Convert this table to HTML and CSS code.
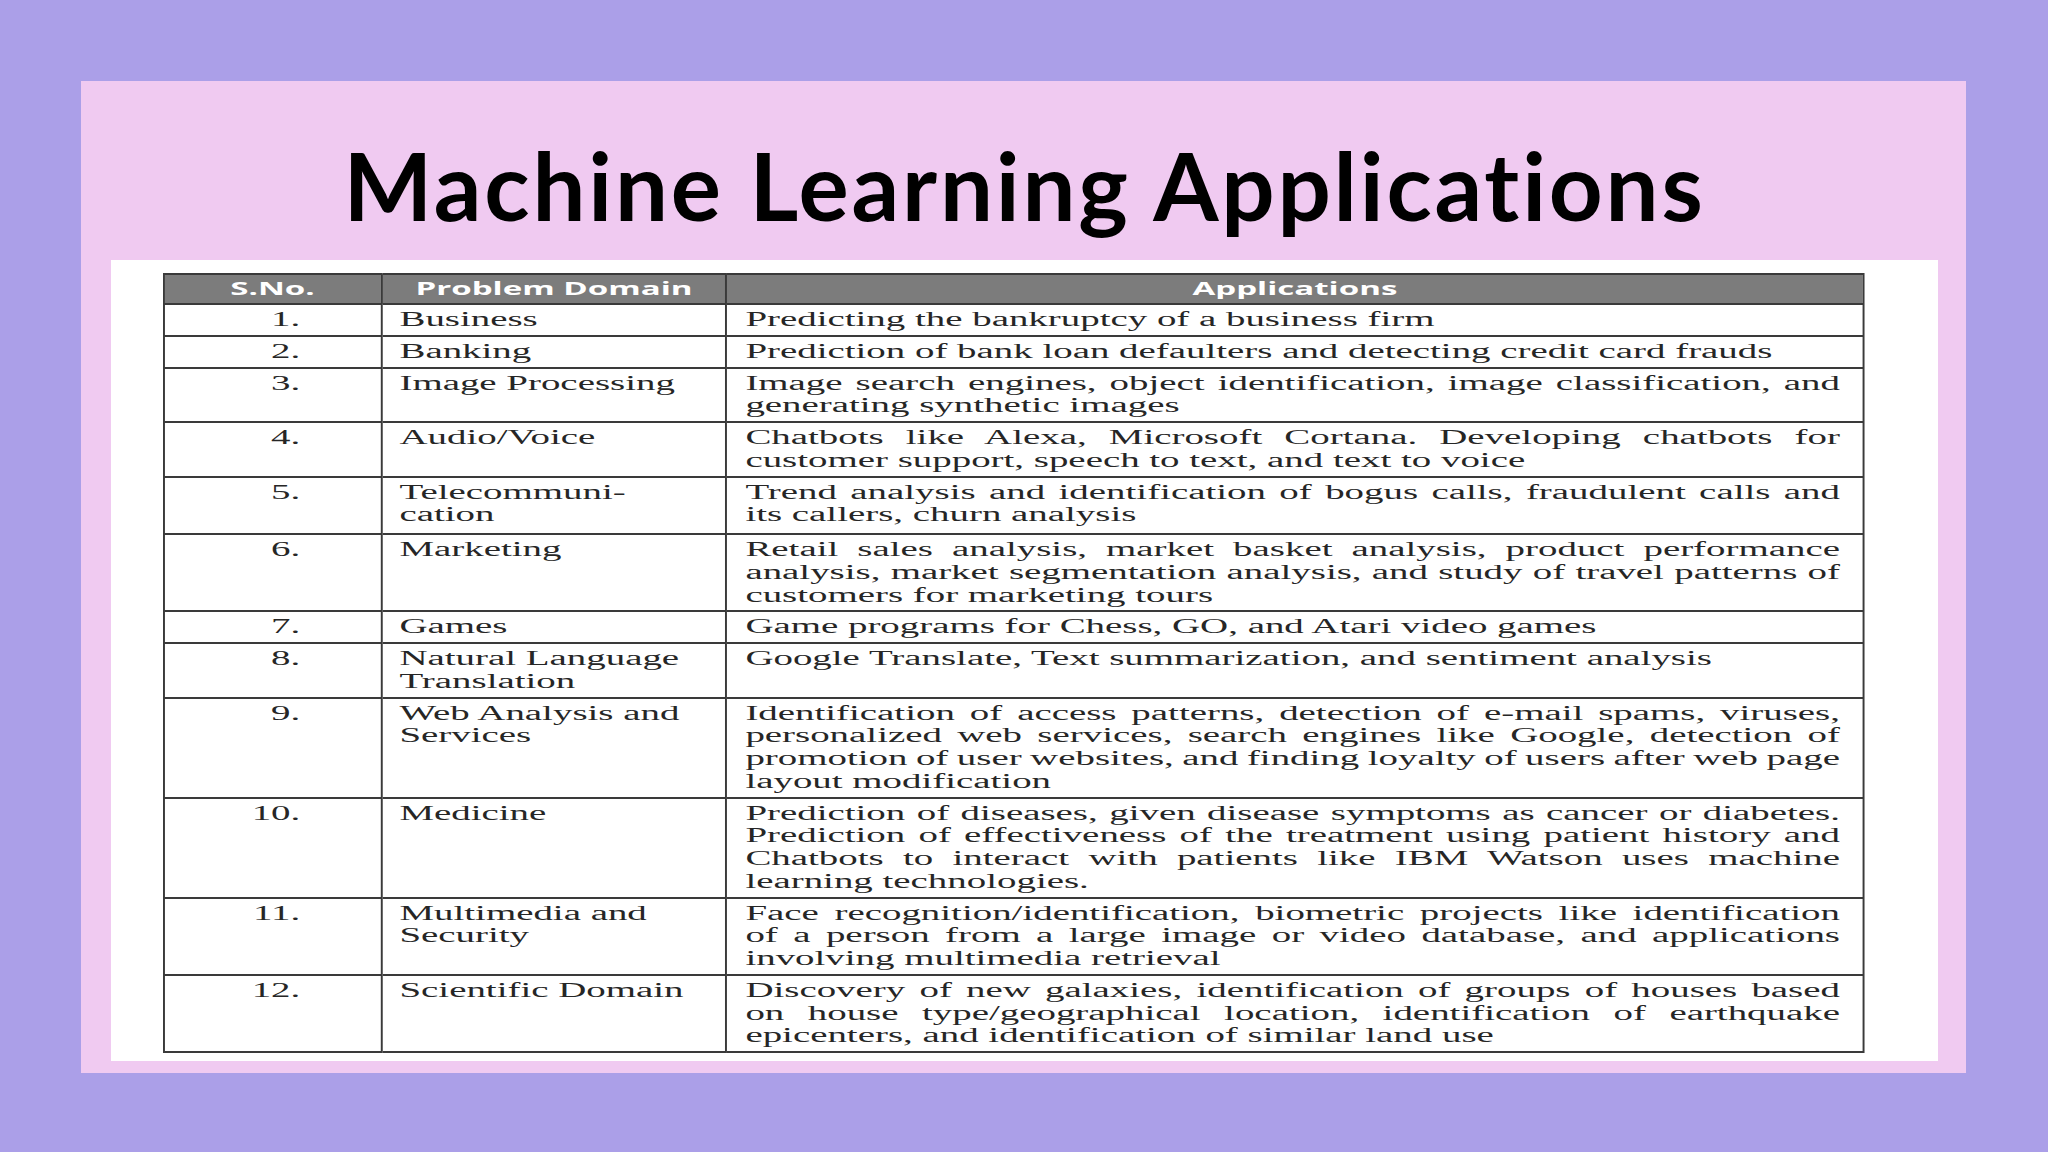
FILE: index.html
```html
<!DOCTYPE html>
<html lang="en">
<head>
<meta charset="utf-8">
<title>Machine Learning Applications</title>
<link rel="stylesheet" href="styles.css">
</head>
<body>
<div class="slide">
  <div class="panel">
    <h1 class="title">Machine Learning Applications</h1>
    <div class="sheet">
      <table class="ml">
        <colgroup>
          <col class="c1"><col class="c2"><col class="c3">
        </colgroup>
        <thead>
          <tr><th>S.No.</th><th>Problem Domain</th><th>Applications</th></tr>
        </thead>
        <tbody>
          <tr><td class="n">1.</td><td class="d">Business</td><td class="a"><div class="l">Predicting the bankruptcy of a business firm</div></td></tr>
          <tr><td class="n">2.</td><td class="d">Banking</td><td class="a"><div class="l">Prediction of bank loan defaulters and detecting credit card frauds</div></td></tr>
          <tr><td class="n">3.</td><td class="d">Image Processing</td><td class="a"><div class="l j">Image search engines, object identification, image classification, and</div><div class="l">generating synthetic images</div></td></tr>
          <tr><td class="n">4.</td><td class="d">Audio/Voice</td><td class="a"><div class="l j">Chatbots like Alexa, Microsoft Cortana. Developing chatbots for</div><div class="l">customer support, speech to text, and text to voice</div></td></tr>
          <tr class="tall"><td class="n">5.</td><td class="d">Telecommuni-<br>cation</td><td class="a"><div class="l j">Trend analysis and identification of bogus calls, fraudulent calls and</div><div class="l">its callers, churn analysis</div></td></tr>
          <tr><td class="n">6.</td><td class="d">Marketing</td><td class="a"><div class="l j">Retail sales analysis, market basket analysis, product performance</div><div class="l j">analysis, market segmentation analysis, and study of travel patterns of</div><div class="l">customers for marketing tours</div></td></tr>
          <tr><td class="n">7.</td><td class="d">Games</td><td class="a"><div class="l">Game programs for Chess, GO, and Atari video games</div></td></tr>
          <tr><td class="n">8.</td><td class="d">Natural Language<br>Translation</td><td class="a"><div class="l">Google Translate, Text summarization, and sentiment analysis</div></td></tr>
          <tr><td class="n">9.</td><td class="d">Web Analysis and<br>Services</td><td class="a"><div class="l j">Identification of access patterns, detection of e-mail spams, viruses,</div><div class="l j">personalized web services, search engines like Google, detection of</div><div class="l j">promotion of user websites, and finding loyalty of users after web page</div><div class="l">layout modification</div></td></tr>
          <tr><td class="n">10.</td><td class="d">Medicine</td><td class="a"><div class="l j">Prediction of diseases, given disease symptoms as cancer or diabetes.</div><div class="l j">Prediction of effectiveness of the treatment using patient history and</div><div class="l j">Chatbots to interact with patients like IBM Watson uses machine</div><div class="l">learning technologies.</div></td></tr>
          <tr><td class="n">11.</td><td class="d">Multimedia and<br>Security</td><td class="a"><div class="l j">Face recognition/identification, biometric projects like identification</div><div class="l j">of a person from a large image or video database, and applications</div><div class="l">involving multimedia retrieval</div></td></tr>
          <tr><td class="n">12.</td><td class="d">Scientific Domain</td><td class="a"><div class="l j">Discovery of new galaxies, identification of groups of houses based</div><div class="l j">on house type/geographical location, identification of earthquake</div><div class="l">epicenters, and identification of similar land use</div></td></tr>
        </tbody>
      </table>
    </div>
  </div>
</div>
</body>
</html>
```
FILE: styles.css
```css
html, body {
  margin: 0;
  padding: 0;
}
body {
  background: #ab9fe8;
  width: 2048px;
  height: 1152px;
  overflow: hidden;
}
.slide {
  padding: 81px 82px 0 81px;
}
.panel {
  background: #f0caf1;
  height: 992px;
  padding: 0 28px 0 30px;
  display: flex;
  flex-direction: column;
}
.title {
  margin: 0;
  height: 179px;
  box-sizing: border-box;
  padding-top: 57px;
  font-family: Lato, "Open Sans", sans-serif;
  font-weight: 700;
  font-size: 94px;
  line-height: 1;
  letter-spacing: 2.8px;
  text-align: center;
  color: #000;
}
.sheet {
  background: #fff;
  height: 801px;
  box-sizing: border-box;
  padding: 13px 0 0 52px;
}
/* the scanned table is a horizontally stretched picture of a book table */
.ml {
  border-collapse: collapse;
  table-layout: fixed;
  width: 873.7px;
  transform: scaleX(1.9446);
  transform-origin: 0 0;
  color: #262626;
  font-family: "Liberation Serif", "Times New Roman", serif;
  font-size: 20px;
  line-height: 22.75px;
}
.c1 { width: 111.6px; }
.c2 { width: 177.9px; }
.c3 { width: 584.2px; }
.ml th, .ml td {
  border-style: solid;
  border-color: #3a3a3a;
  border-width: 2px 1.2px;
}
.ml th {
  background: #7c7c7c;
  color: #fff;
  font-family: "Open Sans", sans-serif;
  font-weight: 700;
  font-size: 17px;
  height: 28px;
  padding: 0;
  line-height: 28px;
  text-align: center;
}
.ml td {
  vertical-align: top;
  padding: 3px 0 4px 0;
  white-space: nowrap;
}
.ml tr.tall td {
  padding-bottom: 7px;
}
.ml td.n {
  text-align: right;
  padding-right: 41px;
}
.ml td.d {
  padding-left: 9px;
}
.ml td.a {
  padding-left: 9px;
  padding-right: 11.3px;
}
.l {
  white-space: nowrap;
}
.l.j {
  text-align: justify;
  text-align-last: justify;
  word-spacing: -2px;
}
```
